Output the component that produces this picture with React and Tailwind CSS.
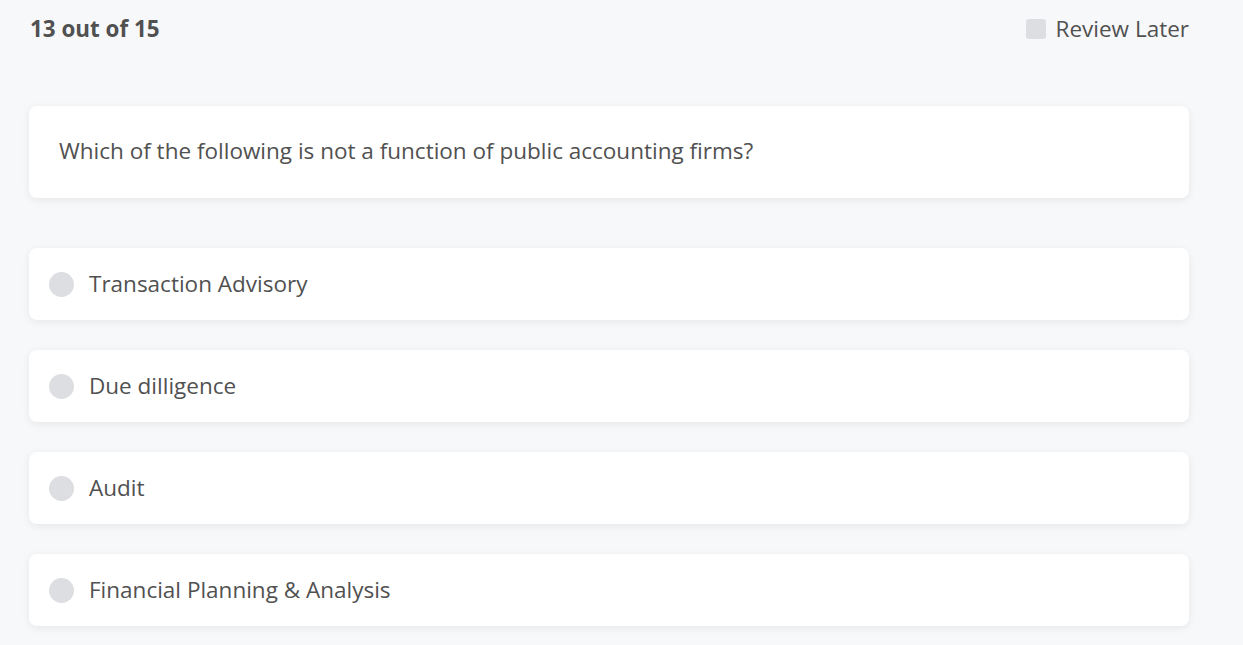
import React from 'react';

const options = [
  'Transaction Advisory',
  'Due dilligence',
  'Audit',
  'Financial Planning & Analysis',
];

const App = () => {
  return (
    <div
      className="min-h-screen bg-[#f7f8fa] text-[#515151]"
      style={{ fontFamily: '"Open Sans", sans-serif' }}
    >
      <div className="w-[1160px] ml-[29px]">
        <div className="flex items-center justify-between h-[57px] pl-[1px]">
          <div className="text-[22.4px] font-bold text-[#505050]">13 out of 15</div>
          <label className="flex items-center gap-[10px] text-[22.5px]">
            <span className="w-[20px] h-[20px] rounded-[3px] bg-[#dddee1] mt-[1px]" />
            Review Later
          </label>
        </div>

        <div className="mt-[49px] bg-white rounded-[8px] shadow-[0_2px_8px_rgba(0,0,0,0.07)] h-[92px] flex items-center px-[30px] pb-[2px] text-[22.5px]">
          Which of the following is not a function of public accounting firms?
        </div>

        <div className="mt-[50px] flex flex-col gap-[30px]">
          {options.map((opt) => (
            <div
              key={opt}
              className="bg-white rounded-[8px] shadow-[0_2px_8px_rgba(0,0,0,0.07)] h-[72px] flex items-center px-[20px] gap-[15px] text-[22.5px]"
            >
              <span className="w-[25px] h-[25px] rounded-full bg-[#dddee1] shrink-0" />
              <span className="-mt-[1px]">{opt}</span>
            </div>
          ))}
        </div>
      </div>
    </div>
  );
};

export default App;
